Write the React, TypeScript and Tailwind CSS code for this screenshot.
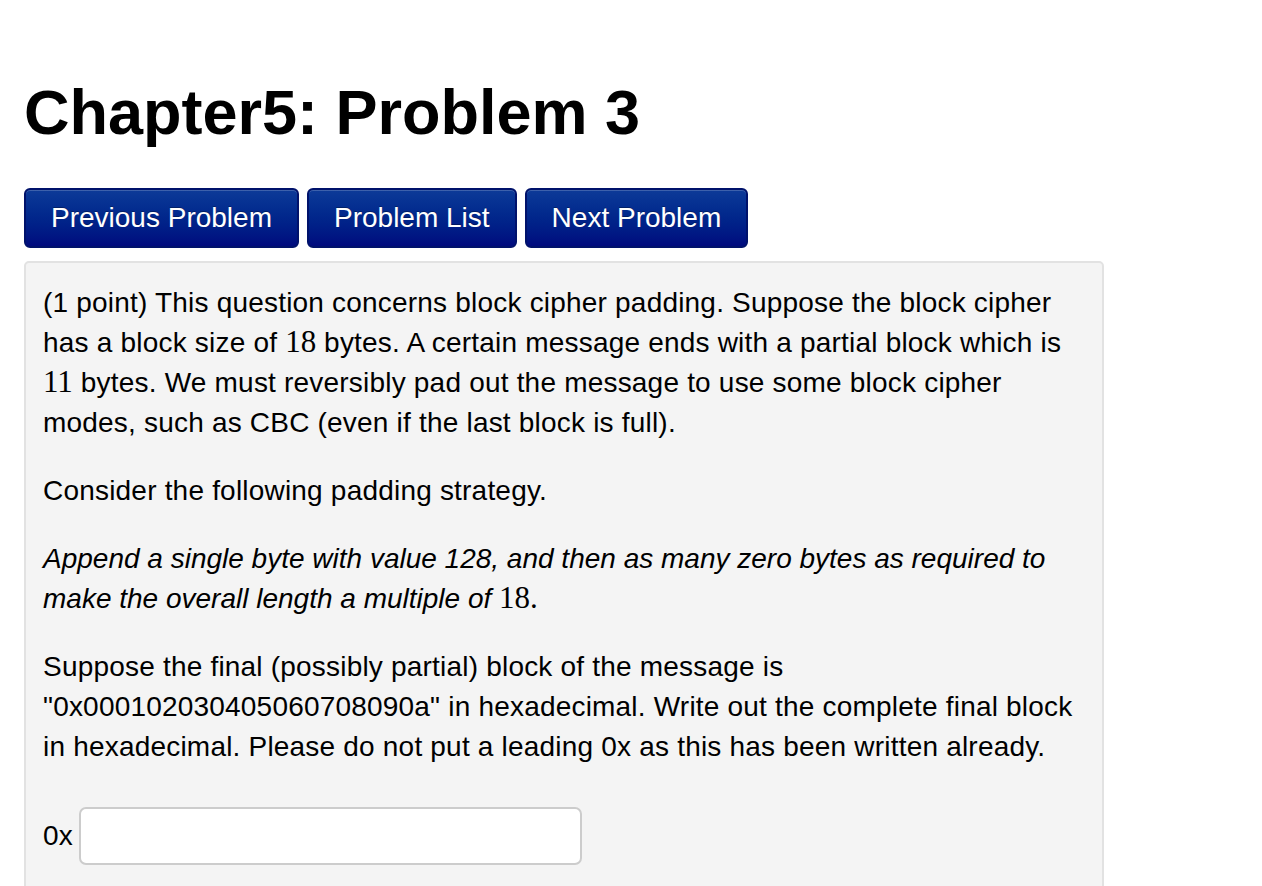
import React from "react";

const NavButton: React.FC<{ label: string }> = ({ label }) => (
  <button className="h-[60px] px-[25px] rounded-[6px] border-2 border-[#00126b] bg-gradient-to-b from-[#0d3a98] to-[#000a7e] text-white text-[28px] leading-[40px] [text-shadow:0_-1px_0_rgba(0,0,0,0.3)] shadow-[inset_0_1px_0_rgba(255,255,255,0.2)]">
    {label}
  </button>
);

const M: React.FC<{ children: React.ReactNode }> = ({ children }) => (
  <span className="font-['Liberation_Serif',serif] text-[31px] leading-[38px] not-italic tracking-normal">{children}</span>
);

export default function App() {
  return (
    <div className="min-h-screen bg-white font-['Liberation_Sans',Arial,sans-serif] text-black">
      <div className="pl-6 pt-[72px] w-[1104px]">
        <h1 className="text-[63px] leading-[80px] font-bold">Chapter5: Problem 3</h1>

        <div className="mt-9 flex gap-2">
          <NavButton label="Previous Problem" />
          <NavButton label="Problem List" />
          <NavButton label="Next Problem" />
        </div>

        <div className="mt-[13px] rounded-[5px] border-2 border-[#e2e2e2] bg-[#f4f4f4] px-[17px] pt-5 pb-10 text-[28px] leading-[40px] tracking-[0.2px]">
          <p>
            (1 point) This question concerns block cipher padding. Suppose the block cipher has a block size of{" "}
            <M>18</M> bytes. A certain message ends with a partial block which is <M>11</M> bytes. We must
            reversibly pad out the message to use some block cipher modes, such as CBC (even if the last block is
            full).
          </p>
          <p className="mt-7">Consider the following padding strategy.</p>
          <p className="mt-7 italic tracking-normal">
            Append a single byte with value 128, and then as many zero bytes as required to make the overall length
            a multiple of <M>18.</M>
          </p>
          <p className="mt-7">
            Suppose the final (possibly partial) block of the message is "0x000102030405060708090a" in hexadecimal.
            Write out the complete final block in hexadecimal. Please do not put a leading 0x as this has been written
            already.
          </p>
          <div className="mt-[40px] flex items-center gap-[6px]">
            <span>0x</span>
            <input
              type="text"
              className="h-[58px] w-[503px] rounded-[7px] border-2 border-[#cccccc] bg-white px-3 text-[28px] outline-none"
            />
          </div>
        </div>
      </div>
    </div>
  );
}
